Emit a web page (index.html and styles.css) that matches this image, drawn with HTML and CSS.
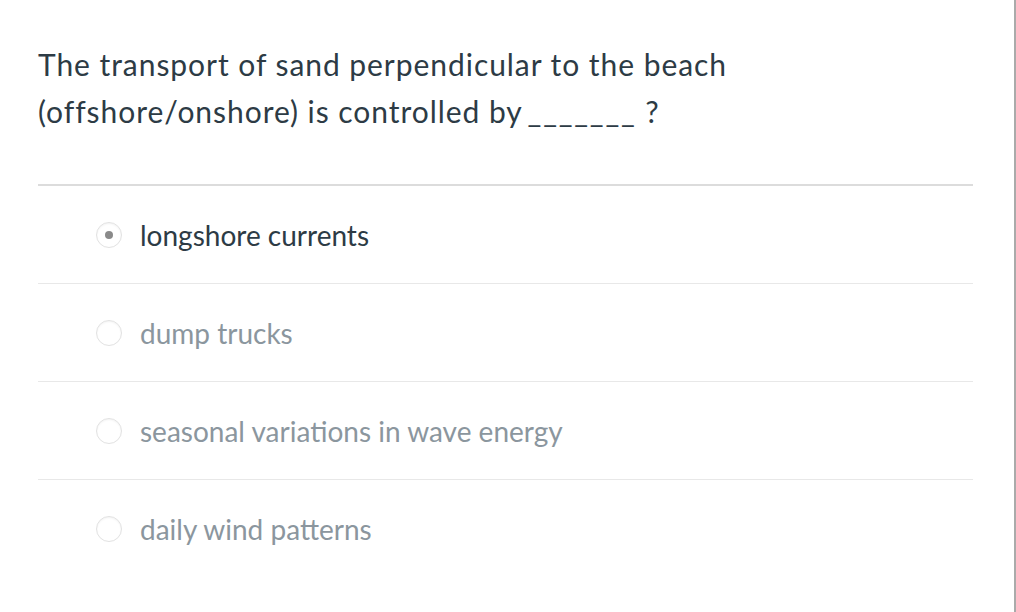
FILE: index.html
```html
<!DOCTYPE html>
<html>
<head>
<meta charset="utf-8">
<link rel="stylesheet" href="styles.css">
</head>
<body>
<div class="page">
  <div class="question">
    <div class="prompt-wrap">
      <p class="prompt">The transport of sand perpendicular to the beach (offshore/onshore) is controlled by <span class="blank">_______</span> ?</p>
    </div>
    <div class="answers">
      <div class="answer selected"><span class="radio"></span><span class="label">longshore currents</span></div>
      <div class="answer"><span class="radio"></span><span class="label">dump trucks</span></div>
      <div class="answer"><span class="radio"></span><span class="label">seasonal variations in wave energy</span></div>
      <div class="answer"><span class="radio"></span><span class="label">daily wind patterns</span></div>
    </div>
  </div>
</div>
</body>
</html>
```
FILE: styles.css
```css
html, body {
  margin: 0;
  padding: 0;
  background: #fff;
}
body {
  font-family: Lato, "Open Sans", sans-serif;
  color: #2d3b45;
}
.page {
  width: 1014px;
  height: 612px;
  border-right: 2px solid #aaaaaa;
}
.question {
  width: 935px;
  padding: 41px 0 0 38px;
}
.prompt-wrap {
  padding-bottom: 49px;
  border-bottom: 2px solid #dcdcdc;
}
.prompt {
  margin: 0;
  font-size: 30px;
  line-height: 47px;
  letter-spacing: 0.95px;
  width: 720px;
}
.blank {
  letter-spacing: 1.8px;
  margin-left: -3px;
}
.answers {
  display: flex;
  flex-direction: column;
}
.answer {
  height: 97px;
  display: flex;
  align-items: center;
  padding-left: 58px;
  border-bottom: 1px solid #e8e8e8;
  font-size: 28px;
  color: #8b969e;
}
.answer:last-child {
  border-bottom: none;
}
.answer.selected {
  color: #2d3b45;
}
.radio {
  width: 24px;
  height: 24px;
  border: 1px solid #e2e2e2;
  border-radius: 50%;
  margin-right: 18px;
  display: flex;
  align-items: center;
  justify-content: center;
  box-shadow: inset 0 1px 2px rgba(0,0,0,0.05);
  flex: none;
}
.answer.selected .radio::after {
  content: "";
  width: 8px;
  height: 8px;
  border-radius: 50%;
  background: #8a8a8a;
}
```
